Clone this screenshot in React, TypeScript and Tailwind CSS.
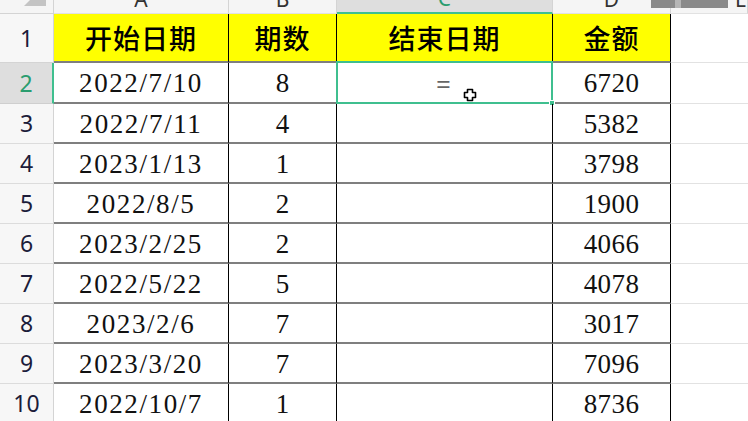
const rows: [string, string, string][] = [
  ['2022/7/10', '8', '6720'],
  ['2022/7/11', '4', '5382'],
  ['2023/1/13', '1', '3798'],
  ['2022/8/5', '2', '1900'],
  ['2023/2/25', '2', '4066'],
  ['2022/5/22', '5', '4078'],
  ['2023/2/6', '7', '3017'],
  ['2023/3/20', '7', '7096'],
  ['2022/10/7', '1', '8736'],
];

const serif = "font-['Liberation_Serif','Noto_Sans_CJK_SC',serif]";
const cjk = "font-['Noto_Sans_CJK_SC',sans-serif]";
const sans = "font-['Noto_Sans','Open_Sans',sans-serif]";

function ColHead({ label, width, active, left }: { label: string; width: string; active?: boolean; left?: boolean }) {
  return (
    <div
      className={`${width} relative flex h-[14px] shrink-0 items-end overflow-hidden border-r border-[#d4d4d4] ${
        left ? 'justify-start pl-[64px]' : 'justify-center'
      } ${
        active ? 'border-b-2 border-b-[#3fbf8f] bg-[#dedede] text-[#2a9d6f]' : 'border-b border-b-[#e2e2e2] bg-[#f5f5f5] text-[#333]'
      }`}
    >
      <span className={`${sans} mb-[3px] text-[21px] leading-[22px]`}>{label}</span>
    </div>
  );
}

function PlusCursor() {
  return (
    <svg width="14" height="14" viewBox="0 0 14 14" className="absolute left-[125px] top-[25px]">
      <path
        d="M4.5 1.5h5v3h3v5h-3v3h-5v-3h-3v-5h3z"
        fill="#fff"
        stroke="#000"
        strokeWidth="1.6"
        strokeLinejoin="round"
      />
    </svg>
  );
}

export default function App() {
  return (
    <div className="relative h-[421px] w-[748px] overflow-hidden bg-white">
      {/* column letters */}
      <div className="flex">
        <div className="relative h-[14px] w-[54px] shrink-0 border-b border-r border-[#d4d4d4] bg-[#f5f5f5]">
          <svg width="22" height="6" viewBox="0 0 22 6" className="absolute left-[24px] top-0">
            <polygon points="0,6 22,6 22,0 6,0" fill="#c4c4c4" />
          </svg>
        </div>
        <ColHead label="A" width="w-[175px]" />
        <ColHead label="B" width="w-[108px]" />
        <ColHead label="C" width="w-[216px]" active />
        <ColHead label="D" width="w-[118px]" />
        <ColHead label="E" width="flex-1" left />
      </div>

      {/* tooltip strip over D/E */}
      <div className="absolute left-[651px] top-0 h-[8px] w-[77px] bg-[#8a8a8a]">
        <div className="ml-[24px] h-[8px] w-[6px] bg-[#b5b5b5]" />
      </div>

      {/* header row 1 */}
      <div className="flex h-[49px]">
        <div className={`${sans} flex w-[54px] shrink-0 items-center justify-center border-b border-r border-[#d4d4d4] bg-[#f7f7f7] text-[23px] text-[#1c1c3a]`}>
          1
        </div>
        {[
          ['开始日期', 'w-[175px]'],
          ['期数', 'w-[108px]'],
          ['结束日期', 'w-[216px]'],
          ['金额', 'w-[118px]'],
        ].map(([t, w]) => (
          <div
            key={t}
            className={`${w} ${cjk} flex shrink-0 items-center justify-center border-b-2 border-r border-b-[#7f7f7f] border-r-black bg-[#ffff00] pt-[2px] text-[27px] font-medium tracking-[1px] text-black`}
          >
            {t}
          </div>
        ))}
        <div className="flex-1 border-b border-[#e2e2e2]" />
      </div>

      {rows.map(([start, n, amt], i) => {
        const sel = i === 0;
        return (
          <div key={i} className={`flex ${sel ? 'h-[41px]' : 'h-[40px]'}`}>
            <div
              className={`${sans} flex w-[54px] shrink-0 items-center justify-center border-b text-[23px] ${
                sel
                  ? 'border-b-[#cfcfcf] border-r-2 border-r-[#3fbf8f] bg-[#dedede] text-[#2a9d6f]'
                  : 'border-b-[#dcdcdc] border-r border-r-[#d4d4d4] bg-[#f7f7f7] text-[#1c1c3a]'
              }`}
            >
              {i + 2}
            </div>
            <div className={`${serif} flex w-[175px] shrink-0 items-center justify-center border-b-2 border-r border-b-[#7f7f7f] border-r-black pt-[2px] text-[27px] tracking-[1.6px] text-[#111]`}>
              {start}
            </div>
            <div className={`${serif} flex w-[108px] shrink-0 items-center justify-center border-b-2 border-r border-b-[#7f7f7f] border-r-black pt-[2px] text-[27px] text-[#111]`}>
              {n}
            </div>
            <div className="relative w-[216px] shrink-0 border-b-2 border-r border-b-[#7f7f7f] border-r-black">
              {sel && (
                <div className="absolute -left-px -top-[2px] h-[43px] w-[217px] border-2 border-[#3fbf8f]">
                  <span className={`${sans} absolute left-[98px] top-[6px] text-[26px] leading-[30px] text-[#666]`}>=</span>
                  <PlusCursor />
                  <div className="absolute -bottom-[4px] -right-[4px] h-[6px] w-[6px] border border-white bg-[#3fbf8f]" />
                </div>
              )}
            </div>
            <div className={`${serif} flex w-[118px] shrink-0 items-center justify-center border-b-2 border-r border-b-[#7f7f7f] border-r-black pt-[2px] text-[27px] tracking-[0.4px] text-[#111]`}>
              {amt}
            </div>
            <div className="flex-1 border-b border-[#e2e2e2]" />
          </div>
        );
      })}
    </div>
  );
}
